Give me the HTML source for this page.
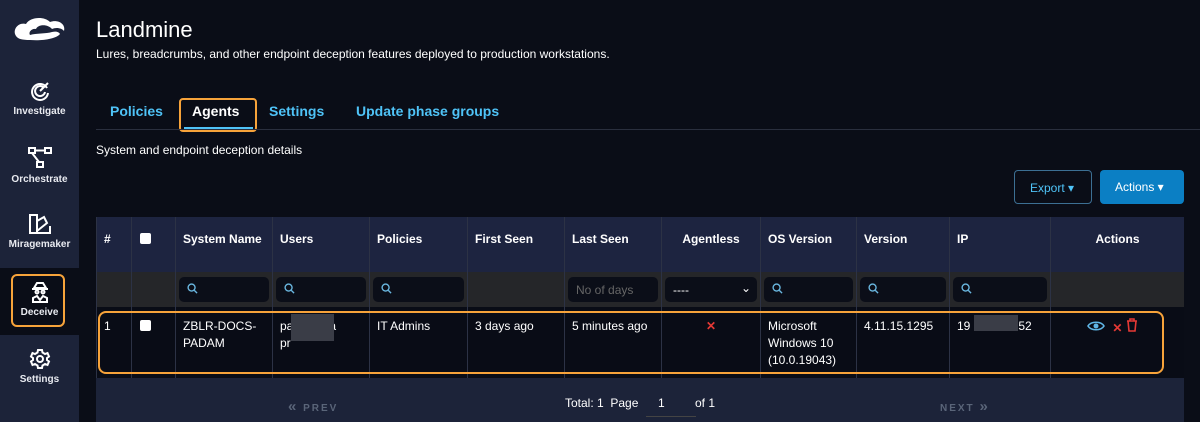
<!DOCTYPE html>
<html><head><style>
*{box-sizing:border-box;margin:0;padding:0}
body{width:1200px;height:422px;background:#0a0d17;font-family:"Liberation Sans",sans-serif;color:#fff;position:relative;overflow:hidden}
.sb{position:absolute;left:0;top:0;width:79px;height:422px;background:#1c2339}
.nav{position:absolute;left:0;width:79px;text-align:center;font-size:10px;font-weight:bold;color:#e8eaf0}
.nav svg{display:block;margin:0 auto 4px}
.abs{position:absolute}
h1{position:absolute;left:96px;top:17px;font-size:22px;font-weight:normal}
.sub{left:96px;top:47px;font-size:12px}
.tab{top:103px;font-size:14px;color:#4fc3f7;font-weight:bold}
table{position:absolute;left:96px;top:217px;width:1088px;border-collapse:collapse;font-size:12px}
td,th{border-left:1px solid #2c3245;vertical-align:top;text-align:left;padding:0 7px}
th{background:#1d2440;height:55px;padding-top:15px;font-weight:bold}
tr.f td{background:#252629;height:35px;padding:4px 3px;vertical-align:middle}
tr.b td{background:#090c16;height:71px;padding-top:11px;line-height:17px}
.inp{height:25px;background:#0b0e18;border-radius:5px;position:relative;font-size:12px;color:#666;padding:6px 8px}
.ft{left:96px;top:378px;width:1088px;height:44px;background:#1c2339;font-size:12px}
.cb{display:inline-block;width:11px;height:11px;background:#fff;border-radius:2px;vertical-align:-1px}
</style></head><body>
<div class="sb">
 <svg class="abs" style="left:12px;top:12px" width="54" height="34" viewBox="0 0 54 26"><path d="M4 20 C0 14 6 6 14 8 C18 1 32 0 38 6 C46 3 54 8 52 15 C50 12 44 11 40 13 C36 8 26 8 24 13 C20 12 16 16 18 19 C24 17 34 18 40 16 C44 15 47 16 48 18 C44 23 30 25 18 24 C10 24 6 23 4 20Z" fill="#fff"/></svg>
 <div class="nav" style="top:80px"><svg width="22" height="22" viewBox="0 0 22 22" fill="none" stroke="#fff" stroke-width="2"><path d="M18 8A8 8 0 1 0 19 13"/><path d="M14 7A5 5 0 1 0 16 12"/><path d="M11 11L19 3"/></svg>Investigate</div>
 <div class="nav" style="top:146px"><svg width="26" height="24" viewBox="0 0 26 24" fill="none" stroke="#fff" stroke-width="2"><rect x="2" y="2" width="6" height="5"/><rect x="18" y="2" width="6" height="5"/><rect x="10" y="16" width="6" height="5"/><path d="M8 4.5H18M5 7L12 16"/></svg>Orchestrate</div>
 <div class="nav" style="top:213px"><svg width="24" height="22" viewBox="0 0 24 22" fill="none" stroke="#fff" stroke-width="2"><rect x="2" y="2" width="7" height="18"/><path d="M9 8L16 4L19 10L9 18M9 20H22V13"/></svg>Miragemaker</div>
 <div class="abs" style="left:0;top:268px;width:79px;height:67px;background:#0a0d17"></div>
 <div class="abs" style="left:11px;top:274px;width:54px;height:53px;border:2px solid #f7a33a;border-radius:6px"></div>
 <div class="nav" style="top:281px"><svg width="20" height="22" viewBox="0 0 20 22" fill="none" stroke="#fff" stroke-width="2"><path d="M4 7H16L13 2H7Z M2 8H18"/><circle cx="7" cy="11" r="1.5"/><circle cx="13" cy="11" r="1.5"/><path d="M3 21V17L7 15L10 19L13 15L17 17V21Z"/></svg>Deceive</div>
 <div class="nav" style="top:348px"><svg width="22" height="22" viewBox="0 0 22 22" fill="none" stroke="#fff" stroke-width="2"><circle cx="11" cy="11" r="3"/><path d="M9 2H13L13.5 4.5L16 6L18.5 5L20 8.5L18 10V12L20 13.5L18.5 17L16 16L13.5 17.5L13 20H9L8.5 17.5L6 16L3.5 17L2 13.5L4 12V10L2 8.5L3.5 5L6 6L8.5 4.5Z"/></svg>Settings</div>
</div>
<h1>Landmine</h1>
<div class="abs sub">Lures, breadcrumbs, and other endpoint deception features deployed to production workstations.</div>
<div class="abs tab" style="left:110px">Policies</div>
<div class="abs tab" style="left:192px;color:#fff">Agents</div>
<div class="abs" style="left:179px;top:98px;width:78px;height:34px;border:2px solid #f7a33a;border-radius:4px"></div>
<div class="abs" style="left:184px;top:127px;width:69px;height:2px;background:#4fc3f7"></div>
<div class="abs tab" style="left:269px">Settings</div>
<div class="abs tab" style="left:356px">Update phase groups</div>
<div class="abs" style="left:96px;top:129px;width:1104px;height:1px;background:#2a2f3e"></div>
<div class="abs sub" style="top:143px">System and endpoint deception details</div>
<div class="abs" style="left:1014px;top:170px;width:78px;height:34px;border:1px solid #3c6f93;border-radius:4px;color:#4fc3f7;font-size:12px;padding:10px 0 0 15px">Export &#9662;</div>
<div class="abs" style="left:1100px;top:170px;width:84px;height:34px;background:#0b7fc4;border-radius:4px;font-size:12px;padding:10px 0 0 15px">Actions &#9662;</div>
<svg width="0" height="0" style="position:absolute"><defs><symbol id="q" viewBox="0 0 12 12"><circle cx="5" cy="5" r="3.8" fill="none" stroke="#6ab7e0" stroke-width="1.5"/><path d="M8 8L11 11" stroke="#6ab7e0" stroke-width="1.5"/></symbol></defs></svg>
<table>
<tr><th style="width:35px">#</th><th style="width:44px;padding-left:8px"><span class="cb"></span></th><th style="width:97px">System Name</th><th style="width:97px">Users</th><th style="width:98px">Policies</th><th style="width:97px">First Seen</th><th style="width:97px">Last Seen</th><th style="width:99px;text-align:center">Agentless</th><th style="width:96px">OS Version</th><th style="width:93px">Version</th><th style="width:101px">IP</th><th style="text-align:center">Actions</th></tr>
<tr class="f"><td></td><td></td><td><div class="inp"><svg width="11" height="11"><use href="#q"/></svg></div></td><td><div class="inp"><svg width="11" height="11"><use href="#q"/></svg></div></td><td><div class="inp"><svg width="11" height="11"><use href="#q"/></svg></div></td><td></td><td><div class="inp">No of days</div></td><td><div class="inp" style="color:#fff">----<span style="position:absolute;right:6px;top:4px">&#8964;</span></div></td><td><div class="inp"><svg width="11" height="11"><use href="#q"/></svg></div></td><td><div class="inp"><svg width="11" height="11"><use href="#q"/></svg></div></td><td><div class="inp"><svg width="11" height="11"><use href="#q"/></svg></div></td><td></td></tr>
<tr class="b"><td>1</td><td style="padding-left:8px"><span class="cb"></span></td><td>ZBLR-DOCS-<br>PADAM</td><td style="position:relative">pa&nbsp;&nbsp;&nbsp;&nbsp;&nbsp;&nbsp;&nbsp;&nbsp;&nbsp;ya<br>pr<div class="abs" style="left:18px;top:7px;width:43px;height:27px;background:#3a3d47"></div></td><td>IT Admins</td><td>3 days ago</td><td>5 minutes ago</td><td style="text-align:center;color:#e53935;font-weight:bold">✕</td><td>Microsoft<br>Windows 10<br>(10.0.19043)</td><td>4.11.15.1295</td><td style="position:relative">19<div class="abs" style="left:24px;top:8px;width:44px;height:16px;background:#3a3d47"></div><span style="margin-left:48px">52</span></td><td style="padding-left:36px"><svg width="18" height="12" viewBox="0 0 18 12"><path d="M1 6C4 1 14 1 17 6C14 11 4 11 1 6Z" fill="none" stroke="#5fb6e6" stroke-width="1.6"/><circle cx="9" cy="6" r="2.5" fill="#5fb6e6"/></svg> <span style="color:#e53935;font-weight:bold;margin:0 4px">✕</span><svg width="12" height="14" viewBox="0 0 12 14" fill="none" stroke="#e53935" stroke-width="1.6"><path d="M1 3H11M4 3V1H8V3M2 3L3 13H9L10 3"/></svg></td></tr>
</table>
<div class="abs" style="left:98px;top:311px;width:1066px;height:63px;border:2px solid #f7a33a;border-radius:8px"></div>
<div class="abs ft">
 <div class="abs" style="left:192px;top:20px;color:#5a6579;font-size:10px;font-weight:bold;letter-spacing:2px"><span style="font-size:15px">«</span> PREV</div>
 <div class="abs" style="left:469px;top:18px">Total: 1 &nbsp;Page</div>
 <div class="abs" style="left:550px;top:18px;width:50px;border-bottom:1px solid #444;padding:0 0 6px 12px">1</div>
 <div class="abs" style="left:599px;top:18px">of 1</div>
 <div class="abs" style="left:844px;top:20px;color:#5a6579;font-size:10px;font-weight:bold;letter-spacing:2px">NEXT <span style="font-size:15px">»</span></div>
</div>
</body></html>
